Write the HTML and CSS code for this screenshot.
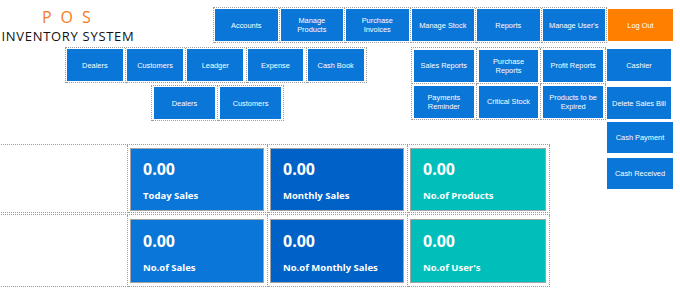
FILE: index.html
```html
<!DOCTYPE html>
<html lang="en">
<head>
<meta charset="utf-8">
<title>POS Inventory System</title>
<link rel="stylesheet" href="styles.css">
</head>
<body>
<div class="form">
  <div class="main">
    <div class="top-row">
      <div class="brand">
        <div class="brand-pos">P O S</div>
        <div class="brand-name">INVENTORY SYSTEM</div>
      </div>
      <div class="grid grid-top">
        <div class="cell"><button class="btn">Accounts</button></div>
        <div class="cell"><button class="btn">Manage Products</button></div>
        <div class="cell"><button class="btn">Purchase Invoices</button></div>
        <div class="cell"><button class="btn">Manage Stock</button></div>
        <div class="cell"><button class="btn">Reports</button></div>
        <div class="cell"><button class="btn">Manage User's</button></div>
      </div>
    </div>
    <div class="mid-row">
      <div class="mid-left">
        <div class="grid grid-a">
          <div class="cell"><button class="btn">Dealers</button></div>
          <div class="cell"><button class="btn">Customers</button></div>
          <div class="cell"><button class="btn">Leadger</button></div>
          <div class="cell"><button class="btn">Expense</button></div>
          <div class="cell"><button class="btn">Cash Book</button></div>
        </div>
        <div class="grid grid-b">
          <div class="cell"><button class="btn">Dealers</button></div>
          <div class="cell"><button class="btn">Customers</button></div>
        </div>
      </div>
      <div class="grid grid-c">
        <div class="cell"><button class="btn">Sales Reports</button></div>
        <div class="cell"><button class="btn">Purchase Reports</button></div>
        <div class="cell"><button class="btn">Profit Reports</button></div>
        <div class="cell"><button class="btn">Payments Reminder</button></div>
        <div class="cell"><button class="btn">Critical Stock</button></div>
        <div class="cell"><button class="btn">Products to be Expired</button></div>
      </div>
    </div>
    <div class="stats">
      <div class="grid stats-grid">
        <div class="cell stat-empty"></div>
        <div class="cell stat-cell">
          <div class="tile tile-blue"><div class="tile-value">0.00</div><div class="tile-label">Today Sales</div></div>
        </div>
        <div class="cell stat-cell">
          <div class="tile tile-dark"><div class="tile-value">0.00</div><div class="tile-label">Monthly Sales</div></div>
        </div>
        <div class="cell stat-cell">
          <div class="tile tile-teal"><div class="tile-value">0.00</div><div class="tile-label">No.of Products</div></div>
        </div>
      </div>
      <div class="grid stats-grid stats-grid-2">
        <div class="cell stat-empty"></div>
        <div class="cell stat-cell">
          <div class="tile tile-blue"><div class="tile-value">0.00</div><div class="tile-label">No.of Sales</div></div>
        </div>
        <div class="cell stat-cell">
          <div class="tile tile-dark"><div class="tile-value">0.00</div><div class="tile-label">No.of Monthly Sales</div></div>
        </div>
        <div class="cell stat-cell">
          <div class="tile tile-teal"><div class="tile-value">0.00</div><div class="tile-label">No.of User's</div></div>
        </div>
      </div>
    </div>
  </div>
  <div class="side">
    <button class="btn side-btn btn-logout">Log Out</button>
    <button class="btn side-btn side-cashier">Cashier</button>
    <button class="btn side-btn side-delete">Delete Sales Bill</button>
    <button class="btn side-btn side-payment">Cash Payment</button>
    <button class="btn side-btn side-received">Cash Received</button>
  </div>
</div>
</body>
</html>
```
FILE: styles.css
```css
* { box-sizing: border-box; }

html, body {
  margin: 0;
  padding: 0;
  background: #ffffff;
  overflow: hidden;
}

.form {
  display: flex;
  align-items: flex-start;
  width: 680px;
  height: 299px;
}

.main {
  width: 607px;
  flex: none;
}

/* Brand */
.top-row {
  display: flex;
  align-items: flex-start;
}

.brand {
  width: 213px;
  flex: none;
  padding-top: 9px;
}

.brand-pos {
  margin-left: 42px;
  font-family: "Open Sans", sans-serif;
  font-size: 16px;
  line-height: 16px;
  letter-spacing: 2.4px;
  color: #f77b1c;
}

.brand-name {
  margin-top: 4.5px;
  margin-left: 1.5px;
  font-family: "Open Sans", sans-serif;
  font-size: 13px;
  line-height: 13px;
  letter-spacing: 0.7px;
  color: #111111;
  white-space: nowrap;
}

/* Dotted table panels */
.grid {
  display: grid;
  border-top: 1px dotted #9c9c9c;
  border-left: 1px dotted #9c9c9c;
}

.cell {
  border-right: 1px dotted #9c9c9c;
  border-bottom: 1px dotted #9c9c9c;
  padding: 1px;
}

.btn {
  display: block;
  width: 100%;
  height: 32px;
  margin: 0;
  padding: 0 5px;
  border: none;
  border-radius: 0;
  background: #0a76d8;
  color: #ffffff;
  font-family: "Liberation Sans", Arial, sans-serif;
  font-size: 7.4px;
  line-height: 9px;
  text-align: center;
}

.grid-top {
  margin-top: 7px;
  width: 394px;
  grid-template-columns: repeat(6, 1fr);
}

.mid-row {
  display: flex;
  align-items: flex-start;
  margin-top: 4px;
}

.mid-left {
  width: 411px;
  flex: none;
  display: flex;
  flex-direction: column;
  align-items: flex-start;
}

.grid-a {
  margin-left: 65px;
  width: 302px;
  grid-template-columns: repeat(5, 1fr);
}

.grid-a .cell {
  padding: 1px 2.5px 1px 1px;
}

.grid-b {
  margin-left: 151px;
  margin-top: 2px;
  width: 133px;
  grid-template-columns: repeat(2, 1fr);
}

.grid-b .cell {
  padding: 1px 2px;
}

.grid-c {
  width: 195px;
  grid-template-columns: repeat(3, 1fr);
}

.grid-c .cell {
  padding: 1.5px 2px;
}

/* Stats */
.stats {
  margin-top: 23px;
  margin-left: -13px;
}

.stats-grid {
  width: 563px;
  grid-template-columns: 140px 140px 140px 142px;
}

.stats-grid-2 {
  margin-top: 1px;
}

.stat-cell {
  padding: 3px 3px 1px 2px;
}

.stats-grid-2 .stat-cell {
  padding: 4px 3px 3px 2px;
}

.tile {
  height: 63px;
  border: 1px solid #a3a3a3;
  padding: 12px 12px 0 12px;
  color: #ffffff;
  font-family: "Open Sans", sans-serif;
  font-weight: 700;
}

.stats-grid-2 .tile {
  height: 64px;
  padding-top: 13px;
}

.tile-blue { background: #0a76d8; }
.tile-dark { background: #0062c6; }
.tile-teal { background: #00bfbb; }

.tile-value {
  font-size: 16px;
  line-height: 16px;
}

.tile-label {
  margin-top: 13.5px;
  font-size: 9.5px;
  line-height: 10px;
  white-space: nowrap;
}

/* Side column */
.side {
  width: 73px;
  flex: none;
  display: flex;
  flex-direction: column;
  align-items: flex-start;
}

.side-btn {
  padding: 0 2px;
}

.btn-logout {
  margin-top: 9px;
  margin-left: 1px;
  width: 65px;
  background: #ff8000;
}

.side-cashier {
  margin-top: 8px;
  width: 64px;
}

.side-delete {
  margin-top: 6px;
  width: 64px;
}

.side-payment {
  margin-top: 3px;
  width: 66px;
  height: 31px;
}

.side-received {
  margin-top: 5px;
  width: 66px;
  height: 31px;
}
```
